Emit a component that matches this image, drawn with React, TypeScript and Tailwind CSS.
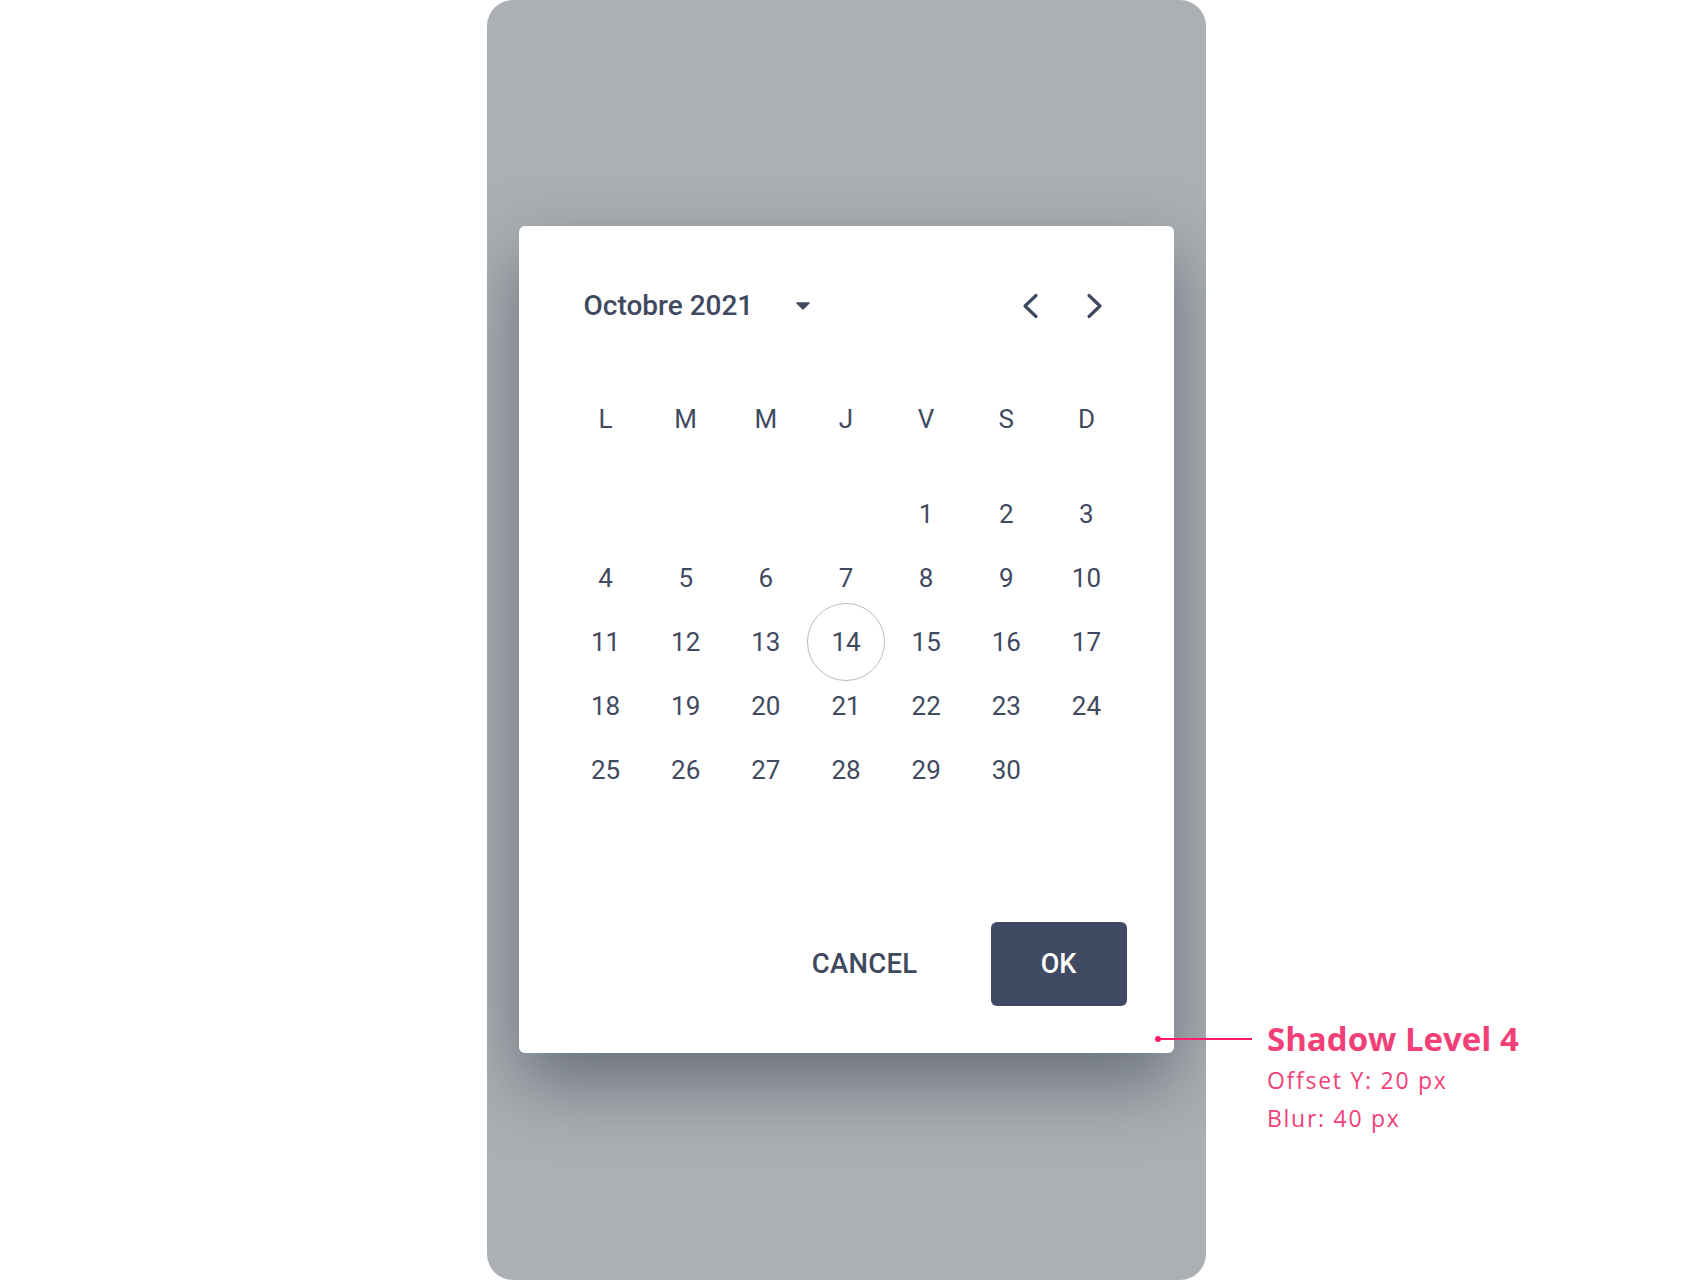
import { ReactNode } from 'react';

const weekDays = ['L', 'M', 'M', 'J', 'V', 'S', 'D'];

// October 2021 starts on a Friday (V)
const cells: (number | null)[] = [null, null, null, null, ...Array.from({ length: 30 }, (_, i) => i + 1)];

const Cell = ({ children, selected }: { children: ReactNode; selected?: boolean }) => (
  <div className="relative flex h-16 items-center justify-center">
    {selected && (
      <span className="absolute left-1/2 top-1/2 h-[78px] w-[78px] -translate-x-1/2 -translate-y-1/2 rounded-full border-[1.5px] border-[#b8bcc6]" />
    )}
    <span className="relative">{children}</span>
  </div>
);

const Chevron = ({ dir }: { dir: 'left' | 'right' }) => (
  <button className="flex h-10 w-10 items-center justify-center" aria-label={dir === 'left' ? 'Mois précédent' : 'Mois suivant'}>
    <svg width="40" height="40" viewBox="0 0 40 40" fill="none">
      <polyline
        points={dir === 'left' ? '26,9.5 15,20 26,30.5' : '14,9.5 25,20 14,30.5'}
        stroke="#3f4a5f"
        strokeWidth="3.2"
        strokeLinecap="round"
        strokeLinejoin="round"
      />
    </svg>
  </button>
);

const DatePicker = () => (
  <div
    className="flex flex-col rounded-[6px] bg-white px-[47px] pt-[56px] pb-[47px] text-[#3f4a5f] shadow-[0_30px_70px_rgba(35,45,65,0.5)]"
    style={{ fontFamily: 'Roboto, "Liberation Sans", sans-serif' }}
  >
    <div className="flex h-12 items-center pl-[18px] pr-[12px]">
      <span className="text-[28px] font-medium">Octobre 2021</span>
      <svg className="ml-[43px]" width="14" height="8" viewBox="0 0 14 8">
        <path d="M1 1 L13 1 L7 7 Z" fill="#3f4a5f" stroke="#3f4a5f" strokeWidth="1.5" strokeLinejoin="round" />
      </svg>
      <div className="ml-auto flex gap-[25px]">
        <Chevron dir="left" />
        <Chevron dir="right" />
      </div>
    </div>

    <div className="mt-[57px] grid h-16 grid-cols-7 text-[26px]">
      {weekDays.map((d, i) => (
        <div key={i} className="flex items-center justify-center">
          {d}
        </div>
      ))}
    </div>

    <div className="mt-[31px] grid grid-cols-7 text-[26px]">
      {cells.map((n, i) => (
        <Cell key={i} selected={n === 14}>
          {n ?? ''}
        </Cell>
      ))}
    </div>

    <div className="mt-[120px] flex h-[84px] items-center justify-end">
      <button className="mr-[73px] text-[27.5px] font-medium tracking-[0.01em]">CANCEL</button>
      <button className="flex h-[84px] w-[136px] items-center justify-center rounded-[6px] bg-[#404a62] text-[27px] font-medium text-white">
        OK
      </button>
    </div>
  </div>
);

export default function App() {
  return (
    <div className="relative flex h-[1280px] w-full justify-center bg-white">
      <div className="h-[1280px] w-[719px] overflow-hidden rounded-[26px] bg-[#acb0b4] px-[32px] pt-[226px]">
        <DatePicker />
      </div>

      <div
        className="absolute left-[1155px] top-[1019px] flex items-start text-[#f23f78]"
        style={{ fontFamily: '"Open Sans", Lato, sans-serif' }}
      >
        <div className="flex h-10 items-center">
          <span className="h-[6px] w-[6px] rounded-full bg-[#ff1a6c]" />
          <span className="h-[2px] w-[91px] bg-[#ff1a6c]" />
        </div>
        <div className="ml-[15px] flex flex-col">
          <span className="text-[33px] font-bold leading-[40px] whitespace-nowrap">Shadow Level 4</span>
          <span className="mt-[2px] text-[23px] leading-[38px] tracking-[0.075em] whitespace-nowrap">Offset Y: 20 px</span>
          <span className="text-[23px] leading-[38px] tracking-[0.075em] whitespace-nowrap">Blur: 40 px</span>
        </div>
      </div>
    </div>
  );
}
